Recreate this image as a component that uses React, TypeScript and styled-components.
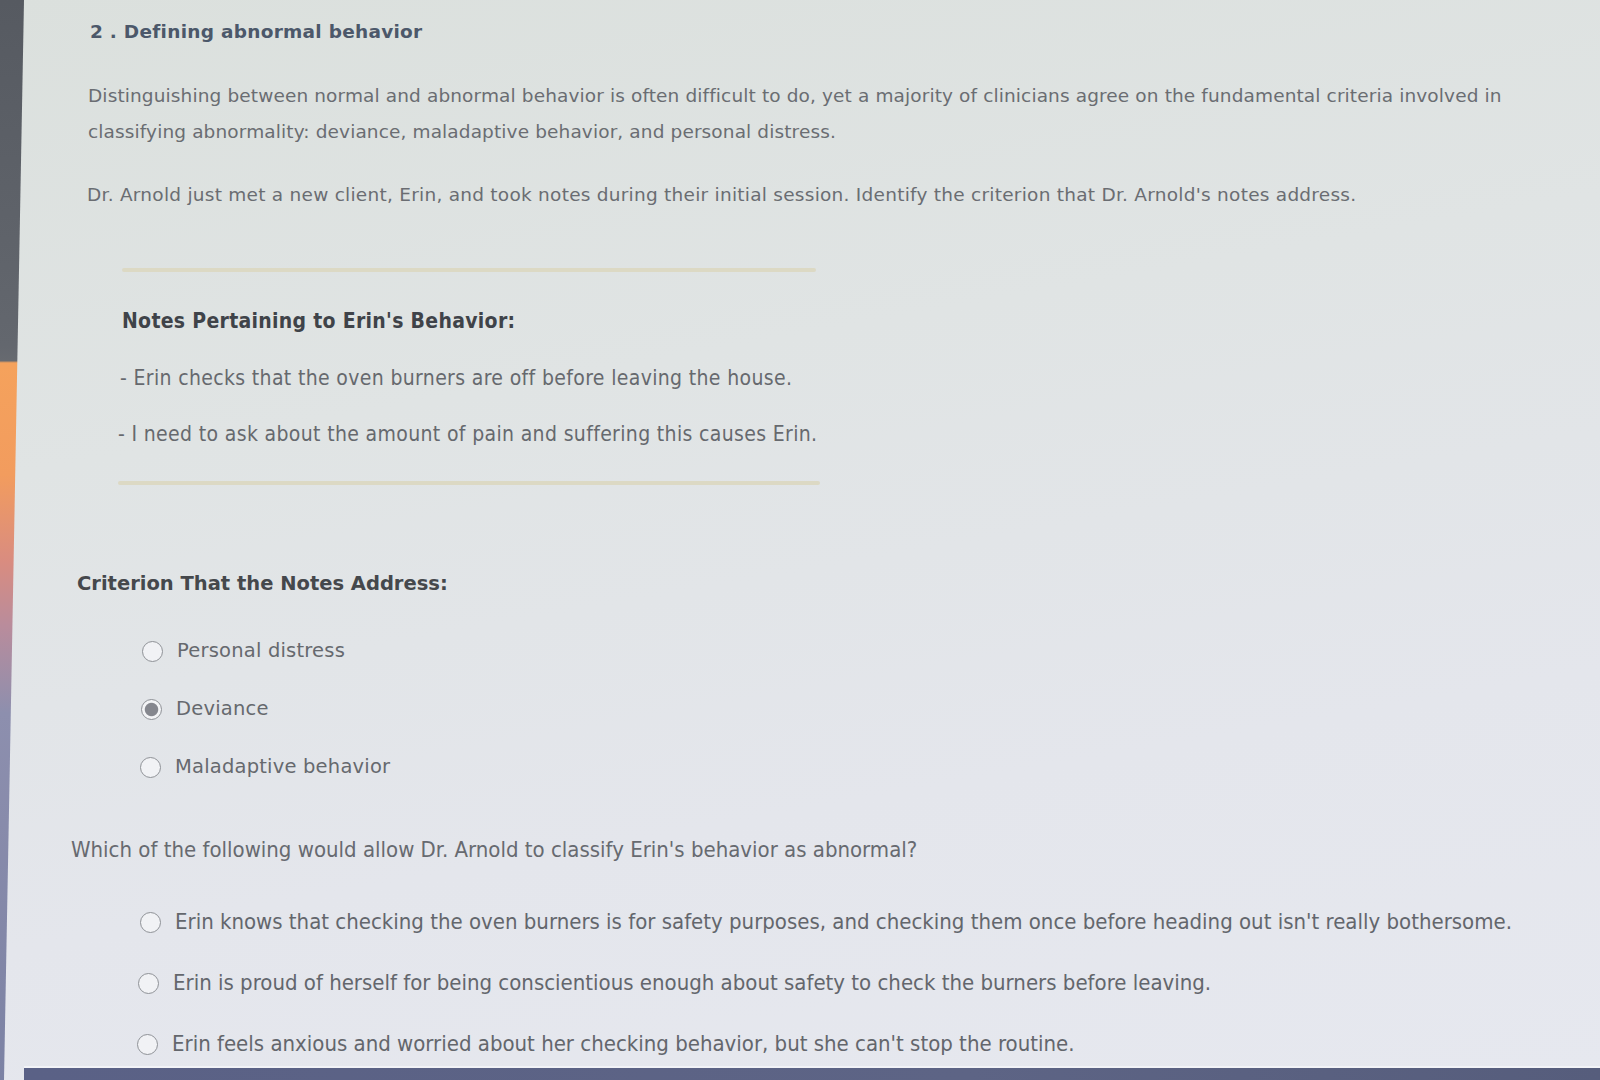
import React from "react";
import styled, { createGlobalStyle } from "styled-components";

const Global = createGlobalStyle`
  html, body {
    margin: 0;
    padding: 0;
  }
  body {
    width: 1600px;
    height: 1080px;
    overflow: hidden;
    font-family: "DejaVu Sans", Verdana, sans-serif;
    background: #e2e5e8;
  }
`;

const Page = styled.div`
  display: flex;
  width: 1600px;
  height: 1080px;
  background: linear-gradient(170deg, #dbe0dd 0%, #e0e4e4 35%, #e4e6ec 70%, #e6e8ef 100%);
`;

const EdgeStrip = styled.div`
  width: 24px;
  flex-shrink: 0;
  clip-path: polygon(0 0, 24px 0, 4px 100%, 0 100%);
  background: linear-gradient(
    180deg,
    #565a61 0%,
    #63676e 32%,
    #676a70 33.4%,
    #f5a25c 33.6%,
    #f29c5e 44%,
    #d98c80 52%,
    #b98c9c 58%,
    #8d8fae 66%,
    #7c82a4 100%
  );
`;

const Main = styled.div`
  flex: 1;
  display: flex;
  flex-direction: column;
  min-width: 0;
`;

const Content = styled.div`
  flex: 1;
  display: flex;
  flex-direction: column;
  padding-top: 20px;
`;

const Title = styled.h2`
  margin: 0 0 0 66px;
  font-size: 18.5px;
  line-height: 24px;
  letter-spacing: 0.27px;
  font-weight: bold;
  color: #4c586a;
`;

const Paragraph = styled.p<{ $top: number; $left: number; $width?: number; $spacing?: number }>`
  margin: ${(p) => p.$top}px 0 0 ${(p) => p.$left}px;
  ${(p) => (p.$width ? `width: ${p.$width}px;` : "")}
  font-size: 18.5px;
  line-height: 36px;
  color: #6a6d72;
  letter-spacing: ${(p) => p.$spacing ?? 0.25}px;
`;

const Rule = styled.div<{ $top: number; $left: number; $width: number }>`
  margin: ${(p) => p.$top}px 0 0 ${(p) => p.$left}px;
  width: ${(p) => p.$width}px;
  height: 4px;
  border-radius: 2px;
  background: #dcd9c4;
`;

const NotesHeading = styled.div`
  margin: 37px 0 0 98px;
  font-family: "DejaVu Sans Condensed", "DejaVu Sans", sans-serif;
  font-stretch: condensed;
  font-size: 21px;
  line-height: 24px;
  letter-spacing: 0.3px;
  font-weight: bold;
  color: #3f4349;
`;

const NoteLine = styled.div<{ $top: number; $left: number }>`
  margin: ${(p) => p.$top}px 0 0 ${(p) => p.$left}px;
  font-family: "DejaVu Sans Condensed", "DejaVu Sans", sans-serif;
  font-stretch: condensed;
  font-size: 21px;
  line-height: 24px;
  letter-spacing: 0.35px;
  color: #66696e;
`;

const SectionHeading = styled.div`
  margin: 87px 0 0 53px;
  font-size: 19.5px;
  line-height: 24px;
  font-weight: bold;
  color: #45484c;
`;

const RadioList = styled.div<{ $top: number; $left: number; $gap: number }>`
  display: flex;
  flex-direction: column;
  gap: ${(p) => p.$gap}px;
  margin: ${(p) => p.$top}px 0 0 ${(p) => p.$left}px;
`;

const RadioRow = styled.label<{ $shift?: number }>`
  display: flex;
  align-items: center;
  gap: 14px;
  height: 24px;
  margin-left: ${(p) => p.$shift ?? 0}px;
`;

const Circle = styled.span<{ $checked?: boolean }>`
  width: 21px;
  height: 21px;
  flex-shrink: 0;
  box-sizing: border-box;
  border-radius: 50%;
  border: 1.8px solid #8f9297;
  background: ${(p) =>
    p.$checked
      ? "radial-gradient(circle, #85878e 0 6.2px, #f3f4f6 7.2px)"
      : "#f1f2f5"};
`;

const OptionLabel = styled.span`
  font-size: 19.5px;
  line-height: 24px;
  letter-spacing: 0.2px;
  color: #66696e;
`;

const Question = styled.div`
  margin: 59px 0 0 47px;
  font-family: "DejaVu Sans Condensed", "DejaVu Sans", sans-serif;
  font-stretch: condensed;
  font-size: 22px;
  line-height: 24px;
  color: #676a70;
`;

const AnswerLabel = styled.span`
  font-family: "DejaVu Sans Condensed", "DejaVu Sans", sans-serif;
  font-stretch: condensed;
  font-size: 22px;
  line-height: 24px;
  color: #63666c;
`;

const BottomBar = styled.div`
  height: 12px;
  flex-shrink: 0;
  border-top: 2px solid #f2f3f7;
  background: linear-gradient(90deg, #5a6186 0%, #5d6485 60%, #565d7c 100%);
`;

const criteria = [
  { label: "Personal distress", checked: false, shift: 2 },
  { label: "Deviance", checked: true, shift: 1 },
  { label: "Maladaptive behavior", checked: false, shift: 0 },
];

const answers = [
  { label: "Erin knows that checking the oven burners is for safety purposes, and checking them once before heading out isn't really bothersome.", shift: 3 },
  { label: "Erin is proud of herself for being conscientious enough about safety to check the burners before leaving.", shift: 1 },
  { label: "Erin feels anxious and worried about her checking behavior, but she can't stop the routine.", shift: 0 },
];

export default function App() {
  return (
    <>
      <Global />
      <Page>
        <EdgeStrip />
        <Main>
          <Content>
            <Title>2 . Defining abnormal behavior</Title>
            <Paragraph $top={34} $left={64} $width={1440} $spacing={0.12}>
              Distinguishing between normal and abnormal behavior is often difficult to do, yet a majority of clinicians agree on the fundamental criteria involved in classifying abnormality: deviance, maladaptive behavior, and personal distress.
            </Paragraph>
            <Paragraph $top={27} $left={63}>
              Dr. Arnold just met a new client, Erin, and took notes during their initial session. Identify the criterion that Dr. Arnold's notes address.
            </Paragraph>
            <Rule $top={55} $left={98} $width={694} />
            <NotesHeading>Notes Pertaining to Erin's Behavior:</NotesHeading>
            <NoteLine $top={33} $left={96}>- Erin checks that the oven burners are off before leaving the house.</NoteLine>
            <NoteLine $top={32} $left={94}>- I need to ask about the amount of pain and suffering this causes Erin.</NoteLine>
            <Rule $top={35} $left={94} $width={702} />
            <SectionHeading>Criterion That the Notes Address:</SectionHeading>
            <RadioList $top={43} $left={116} $gap={34}>
              {criteria.map((c) => (
                <RadioRow key={c.label} $shift={c.shift}>
                  <Circle $checked={c.checked} />
                  <OptionLabel>{c.label}</OptionLabel>
                </RadioRow>
              ))}
            </RadioList>
            <Question>Which of the following would allow Dr. Arnold to classify Erin's behavior as abnormal?</Question>
            <RadioList $top={48} $left={113} $gap={37}>
              {answers.map((a) => (
                <RadioRow key={a.label} $shift={a.shift}>
                  <Circle />
                  <AnswerLabel>{a.label}</AnswerLabel>
                </RadioRow>
              ))}
            </RadioList>
          </Content>
          <BottomBar />
        </Main>
      </Page>
    </>
  );
}
